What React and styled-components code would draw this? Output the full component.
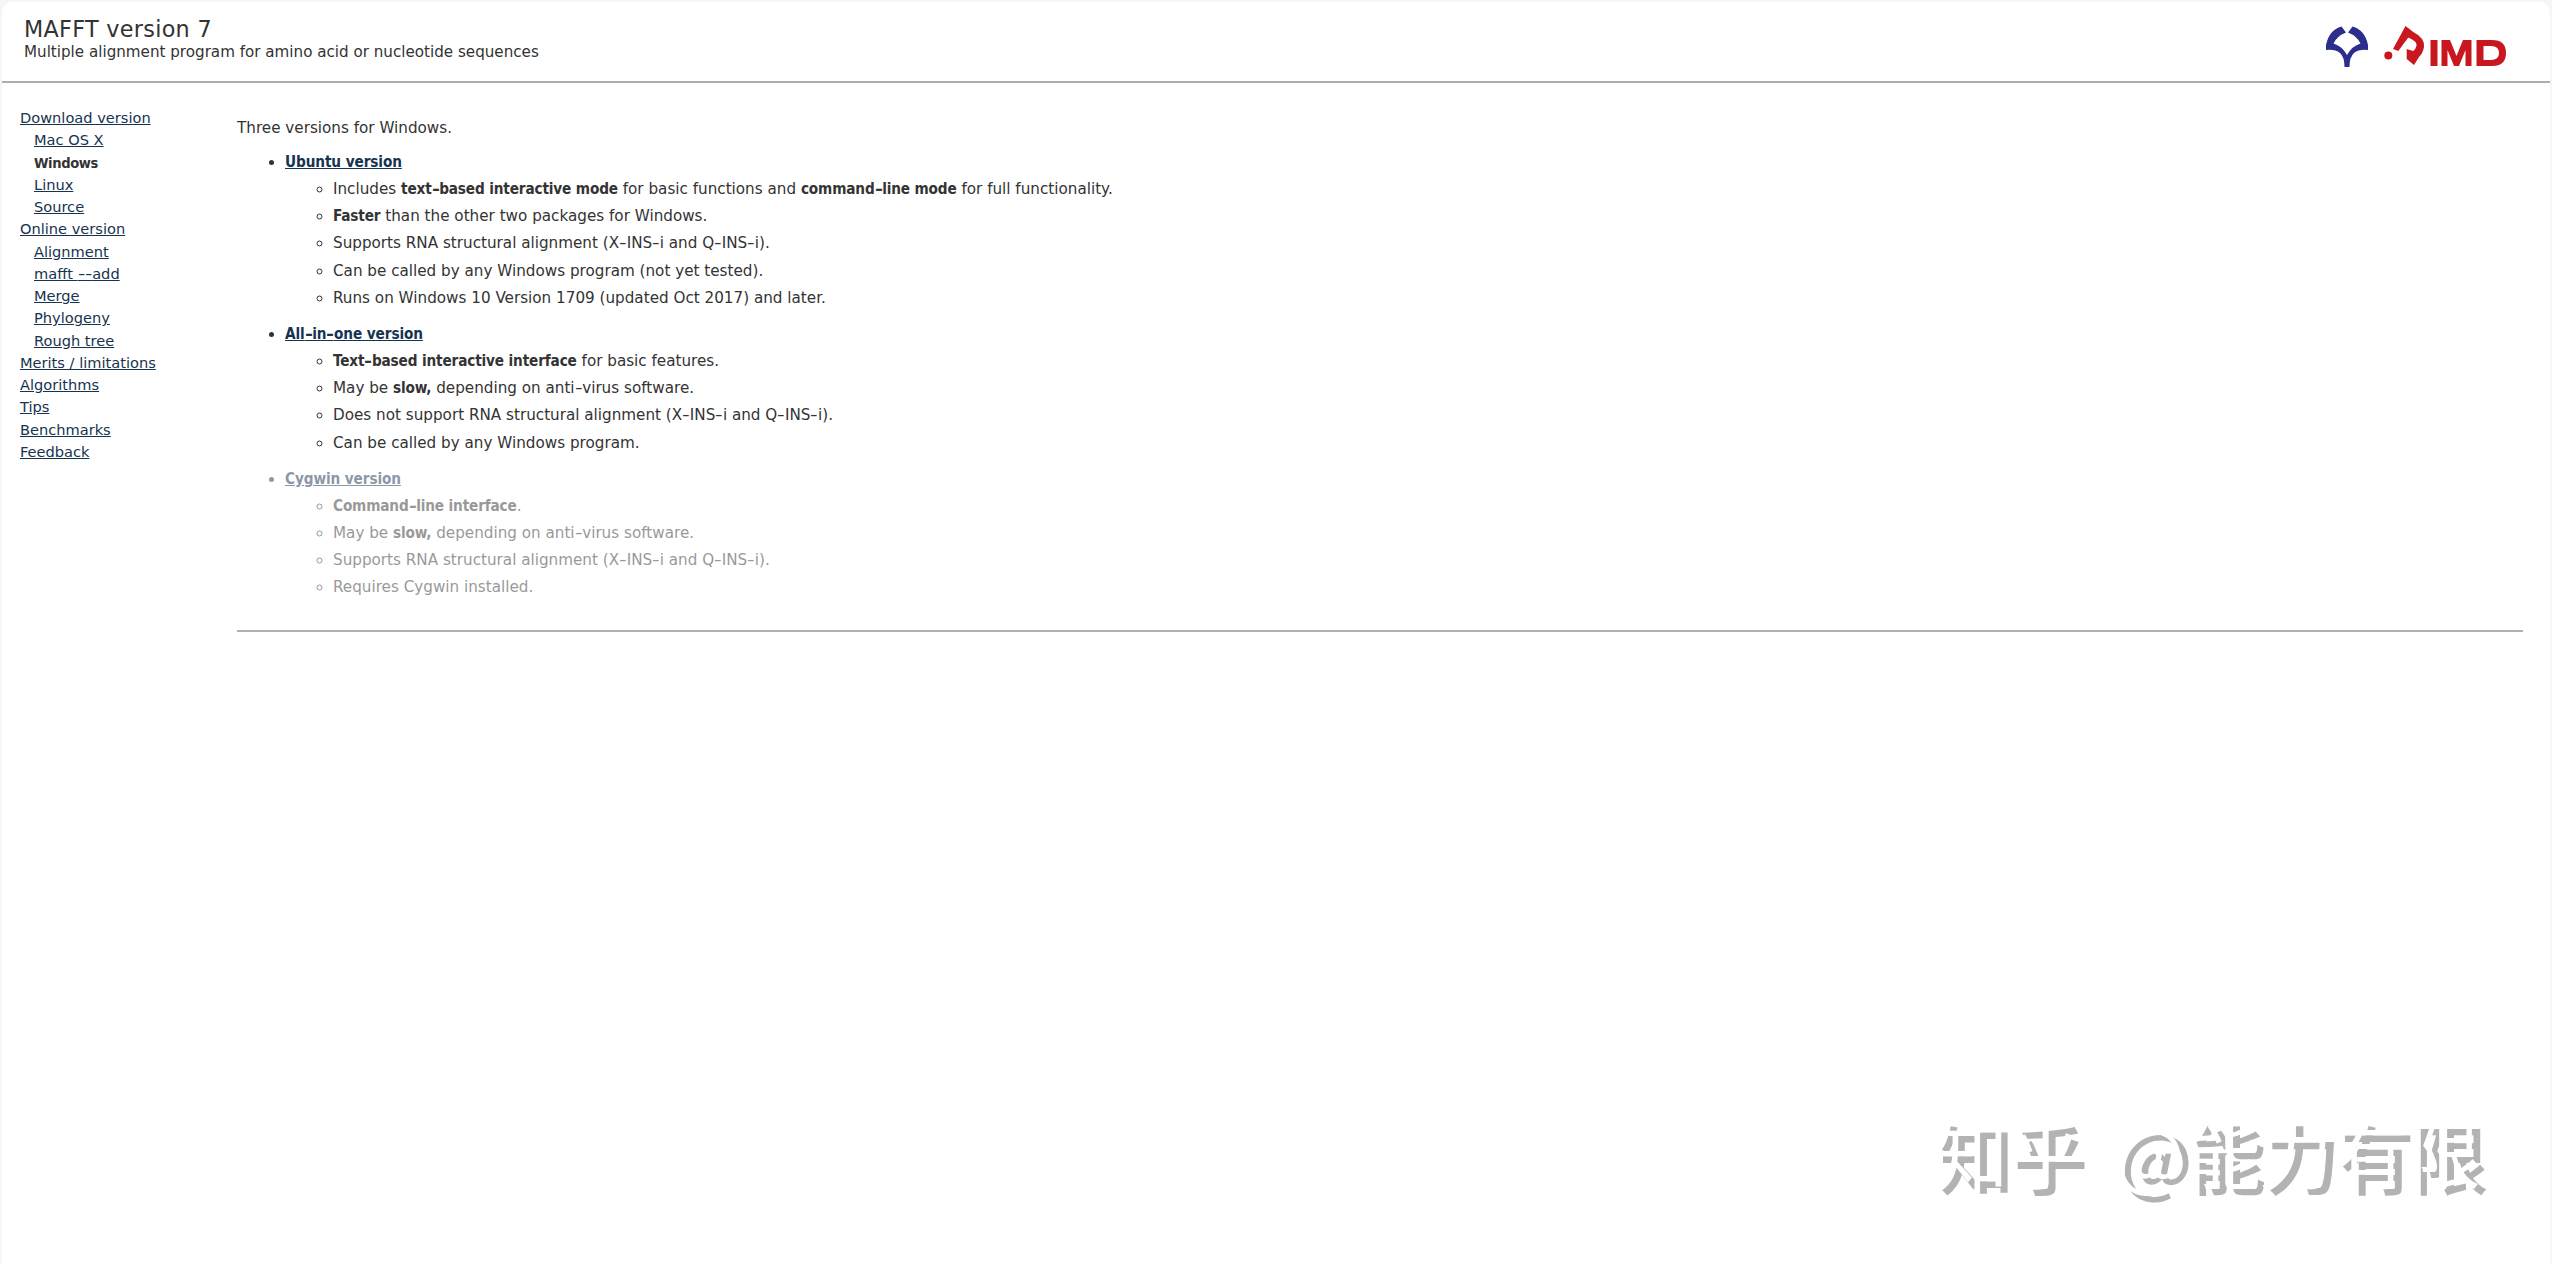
import React from "react";
import styled, { createGlobalStyle } from "styled-components";

const Global = createGlobalStyle`
  html, body { margin: 0; padding: 0; background: #f6f6f6; }
  body { font-family: "DejaVu Sans", sans-serif; font-size: 15.2px; color: #333; }
  b { font-family: "DejaVu Sans Condensed", "DejaVu Sans", sans-serif; font-stretch: condensed; font-weight: bold; letter-spacing: -.15px; }
`;
const Page = styled.div`
  position: relative; height: 1262px; margin: 2px 2px 0 2px; background: #fff;
  border-radius: 10px 10px 0 0; overflow: hidden;
`;
const Header = styled.header`
  border-bottom: 2px solid #adadad; display: flex;
  justify-content: space-between; padding: 14px 44px 0 22px; box-sizing: content-box; height: 65px;
`;
const Title = styled.div`font-size: 22.3px; line-height: 26px; letter-spacing: 0.3px; color: #333;`;
const Subtitle = styled.div`font-size: 15.15px; line-height: 20px; color: #333;`;
const Logos = styled.div`display: flex; align-items: flex-start; gap: 16px; padding-top: 10px;`;
const Body = styled.div`display: flex; padding-top: 24px;`;
const Nav = styled.nav`width: 235px; padding-left: 18px; box-sizing: border-box; flex: none;`;
const NavItem = styled.a`
  display: block; height: 22.25px; line-height: 22.25px; font-size: 14.6px; color: #16334f;
  text-decoration: underline; padding-left: ${p => (p.$sub ? 14 : 0)}px;
  ${p => p.$current && `
    font-family: "DejaVu Sans Condensed", "DejaVu Sans", sans-serif; font-stretch: condensed;
    font-weight: bold; letter-spacing: -.4px; text-decoration: none; color: #333;
  `}
`;
const Main = styled.main`flex: 1; margin-right: 27px; padding-top: 8px;`;
const Lead = styled.p`margin: 0 0 7px; line-height: 27px;`;
const Versions = styled.ul`margin: 0; padding: 0 0 0 48px; list-style: disc;`;
const Version = styled.li`margin-bottom: 9px; ${p => p.$dim && "opacity: .5;"}`;
const VersionLink = styled.a`
  font-family: "DejaVu Sans Condensed", "DejaVu Sans", sans-serif; font-stretch: condensed;
  font-weight: bold; letter-spacing: -.1px; color: #16334f; text-decoration: underline; line-height: 27px;
`;
const Details = styled.ul`margin: 0; padding: 0 0 0 48px; list-style: circle;`;
const Detail = styled.li`line-height: 27.2px;`;
const Dash = styled.span`
  display: inline-block; width: .5em; text-align: center; transform: scaleX(1.4);
  text-decoration: inherit;
`;
const Rule = styled.hr`border: 0; border-top: 2px solid #b0b0b0; margin: 28px 0 0;`;
const Watermark = styled.div`
  position: absolute; left: 1938px; top: 1105px; font-family: "Noto Sans CJK SC", sans-serif;
  font-size: 74px; line-height: 100px; font-weight: 500; color: #b3b3b3; white-space: nowrap;
  word-spacing: 16px;
  &::after {
    content: "知乎 @能力有限"; position: absolute; left: -6px; top: -6px; color: #fff; font-weight: 400;
  }
`;

const dash = s => s.split("-").flatMap((part, i) => (i ? [<Dash key={i}>-</Dash>, part] : [part]));

const OsakaLogo = () => (
  <svg width="42" height="41" viewBox="0 0 42 41" aria-label="Osaka University">
    <path fill="#2b2e8c" d="M15.5 .5 L20 6.5 Q11 10 7.5 17.5 Q16 20 21 29 Q26 20 34.5 17.5 Q31 10 22 6.5 L26.5 .5 Q39 4 42 19 L42 24 Q33 23 28 27 Q23.5 31 23.5 41 L18.5 41 Q18.5 31 14 27 Q9 23 0 24 L0 19 Q3 4 15.5 .5 Z" />
  </svg>
);
const ImdLogo = () => (
  <svg width="122" height="41" viewBox="0 0 122 41" aria-label="IMD">
    <circle cx="4.3" cy="29.5" r="4" fill="#c8171e" />
    <path fill="#c8171e" d="M9 23 L21.5 0 L29.3 6 Q41 12 40 21 Q39 27 35 31 L30 39 L22.7 33 L22.7 23 L29.3 25 Q34.5 20 31.5 16 Q28.5 13 24.3 11.5 L14.3 25 Z" />
    <rect x="46.5" y="14" width="7" height="26" fill="#c8171e" />
    <path fill="#c8171e" d="M57.5 14 H66 L72.5 30 L79 14 H87.5 V40 H81.5 V24 L75 40 H70 L63.5 24 V40 H57.5 Z" />
    <path fill="#c8171e" fillRule="evenodd" d="M92.5 14 H108 Q122 14 122 27 Q122 40 108 40 H92.5 Z M99.5 20 V34 H107 Q115 34 115 27 Q115 20 107 20 Z" />
  </svg>
);

const nav = [
  ["Download version"], ["Mac OS X", 1], ["Windows", 1, 1], ["Linux", 1], ["Source", 1],
  ["Online version"], ["Alignment", 1], ["mafft --add", 1], ["Merge", 1], ["Phylogeny", 1], ["Rough tree", 1],
  ["Merits / limitations"], ["Algorithms"], ["Tips"], ["Benchmarks"], ["Feedback"],
];

export default function App() {
  return (
    <Page>
      <Global />
      <Header>
        <div>
          <Title>MAFFT version 7</Title>
          <Subtitle>Multiple alignment program for amino acid or nucleotide sequences</Subtitle>
        </div>
        <Logos><OsakaLogo /><ImdLogo /></Logos>
      </Header>
      <Body>
        <Nav>
          {nav.map(([t, s, c]) => <NavItem key={t} $sub={s} $current={c}>{dash(t)}</NavItem>)}
        </Nav>
        <Main>
          <Lead>Three versions for Windows.</Lead>
          <Versions>
            <Version>
              <VersionLink>Ubuntu version</VersionLink>
              <Details>
                <Detail>Includes <b>{dash("text-based interactive mode")}</b> for basic functions and <b>{dash("command-line mode")}</b> for full functionality.</Detail>
                <Detail><b>Faster</b> than the other two packages for Windows.</Detail>
                <Detail>Supports RNA structural alignment ({dash("X-INS-i")} and {dash("Q-INS-i")}).</Detail>
                <Detail>Can be called by any Windows program (not yet tested).</Detail>
                <Detail>Runs on Windows 10 Version 1709 (updated Oct 2017) and later.</Detail>
              </Details>
            </Version>
            <Version>
              <VersionLink>{dash("All-in-one version")}</VersionLink>
              <Details>
                <Detail><b>{dash("Text-based interactive interface")}</b> for basic features.</Detail>
                <Detail>May be <b>slow,</b> depending on {dash("anti-virus")} software.</Detail>
                <Detail>Does not support RNA structural alignment ({dash("X-INS-i")} and {dash("Q-INS-i")}).</Detail>
                <Detail>Can be called by any Windows program.</Detail>
              </Details>
            </Version>
            <Version $dim>
              <VersionLink>Cygwin version</VersionLink>
              <Details>
                <Detail><b>{dash("Command-line interface")}</b>.</Detail>
                <Detail>May be <b>slow,</b> depending on {dash("anti-virus")} software.</Detail>
                <Detail>Supports RNA structural alignment ({dash("X-INS-i")} and {dash("Q-INS-i")}).</Detail>
                <Detail>Requires Cygwin installed.</Detail>
              </Details>
            </Version>
          </Versions>
          <Rule />
        </Main>
      </Body>
      <Watermark>知乎 @能力有限</Watermark>
    </Page>
  );
}
